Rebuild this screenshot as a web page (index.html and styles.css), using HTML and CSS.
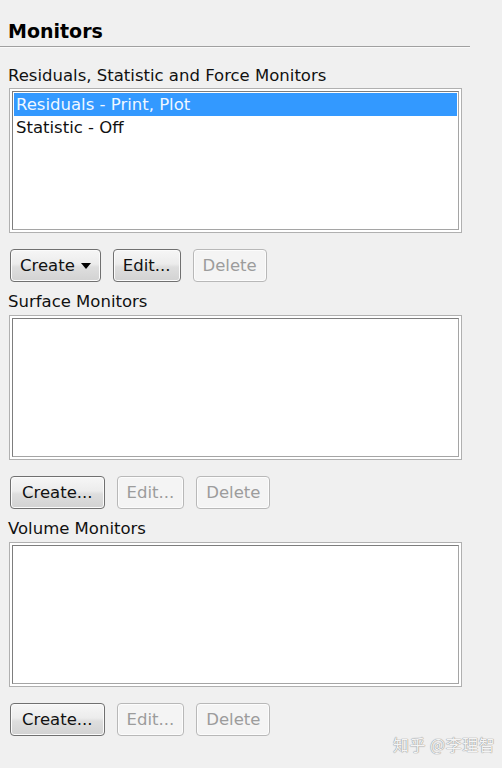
FILE: index.html
```html
<!DOCTYPE html>
<html>
<head>
<meta charset="utf-8">
<link rel="stylesheet" href="styles.css">
</head>
<body>
<div class="page">
  <h1 class="title">Monitors</h1>
  <div class="rule"></div>
  <div class="content">
    <section class="group">
      <div class="label">Residuals, Statistic and Force Monitors</div>
      <div class="listbox">
        <div class="inner">
          <div class="item selected">Residuals - Print, Plot</div>
          <div class="item">Statistic - Off</div>
        </div>
      </div>
      <div class="buttons">
        <button class="btn create-dd">Create <span class="arrow"></span></button>
        <button class="btn">Edit...</button>
        <button class="btn" disabled>Delete</button>
      </div>
    </section>
    <section class="group">
      <div class="label">Surface Monitors</div>
      <div class="listbox"><div class="inner"></div></div>
      <div class="buttons">
        <button class="btn wide">Create...</button>
        <button class="btn" disabled>Edit...</button>
        <button class="btn" disabled>Delete</button>
      </div>
    </section>
    <section class="group">
      <div class="label">Volume Monitors</div>
      <div class="listbox"><div class="inner"></div></div>
      <div class="buttons">
        <button class="btn wide">Create...</button>
        <button class="btn" disabled>Edit...</button>
        <button class="btn" disabled>Delete</button>
      </div>
    </section>
  </div>
  <div class="watermark">知乎 @李理智</div>
</div>
</body>
</html>
```

FILE: styles.css
```css
html, body {
  margin: 0;
  padding: 0;
  background: #f0f0f0;
}
.page {
  position: relative;
  width: 502px;
  height: 768px;
  background: #f0f0f0;
  font-family: "DejaVu Sans", sans-serif;
  color: #000;
  overflow: hidden;
}
.title {
  margin: 0;
  padding: 19px 0 0 8px;
  font-size: 19px;
  line-height: 24px;
  font-weight: bold;
  height: 24px;
}
.rule {
  margin-top: 3px;
  width: 470px;
  height: 1px;
  background: #a0a0a0;
  border-bottom: 1px solid #fafafa;
}
.content {
  padding: 18px 0 0 8px;
  display: flex;
  flex-direction: column;
}
.group {
  display: flex;
  flex-direction: column;
}
.group + .group .label {
  margin-top: 10px;
}
.label {
  font-size: 16.5px;
  line-height: 20px;
  height: 20px;
  color: #111;
}
.listbox {
  box-sizing: border-box;
  margin-top: 2px;
  margin-left: 1px;
  width: 453px;
  height: 145px;
  border: 1px solid #b0b0b0;
  background: #fff;
  padding: 2px;
  display: flex;
  flex-direction: column;
}
.group + .group .listbox {
  margin-top: 3px;
}
.inner {
  flex: 1;
  border: 1px solid #7d7d7d;
  border-right-color: #a5a5a5;
  border-bottom-color: #a5a5a5;
  padding: 1px;
}
.item {
  height: 23px;
  line-height: 23px;
  font-size: 16.5px;
  padding-left: 2px;
  color: #111;
}
.item.selected {
  background: #3399ff;
  color: #f0f7ff;
}
.buttons {
  margin-top: 16px;
  padding-left: 2px;
  display: flex;
  gap: 12px;
}
.btn {
  box-sizing: border-box;
  height: 33px;
  padding: 0 9px;
  font-family: "DejaVu Sans", sans-serif;
  font-size: 16.5px;
  color: #111;
  border: 1px solid #707070;
  border-radius: 4px;
  background: linear-gradient(#f6f6f6 0%, #ececec 45%, #dedede 55%, #d2d2d2 100%);
  box-shadow: inset 0 0 0 1px #fbfbfb;
  display: flex;
  align-items: center;
  justify-content: center;
  gap: 6px;
}
.btn.wide {
  padding: 0 11px;
}
.btn:disabled {
  color: #9c9c9c;
  border-color: #b8b8b8;
  background: #f4f4f4;
  box-shadow: inset 0 0 0 1px #fcfcfc;
}
.arrow {
  width: 0;
  height: 0;
  border-left: 5px solid transparent;
  border-right: 5px solid transparent;
  border-top: 6px solid #000;
}
.watermark {
  position: absolute;
  left: 393px;
  top: 734px;
  font-family: "Noto Sans CJK SC", sans-serif;
  font-size: 16px;
  line-height: 20px;
  color: #f4f4f4;
  text-shadow: 0 0 1px #8a8a8a, 0 0 1px #8a8a8a;
  letter-spacing: 0.5px;
}
```
